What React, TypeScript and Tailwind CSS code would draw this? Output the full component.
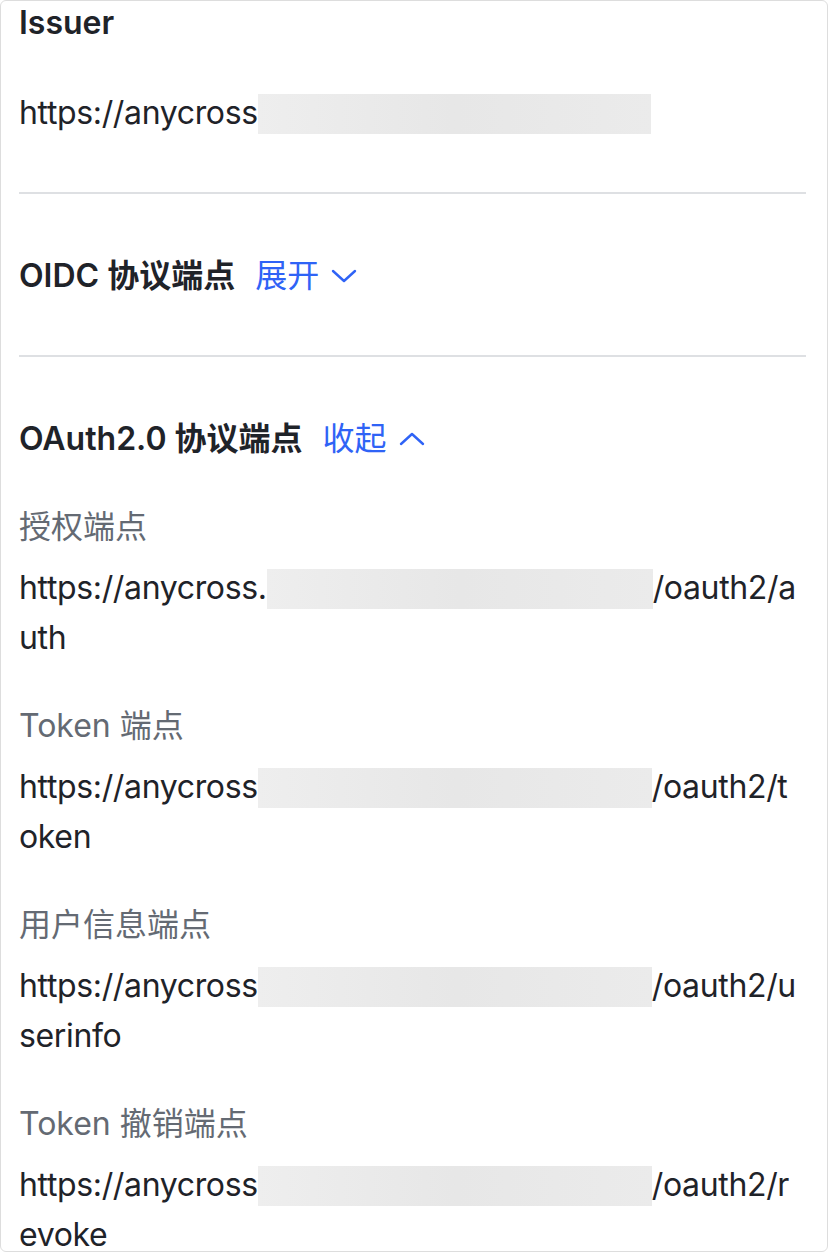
import React from "react";

const FONT = "font-['Inter','Noto_Sans_CJK_SC',sans-serif]";

function Masked({ width }: { width: number }) {
  return (
    <span
      className="inline-block h-[40px] align-[-10px] bg-gradient-to-r from-[#eeeeee] via-[#e7e7e7] to-[#ebebeb]"
      style={{ width }}
    />
  );
}

function Chevron({ up }: { up?: boolean }) {
  return (
    <svg width="26" height="16" viewBox="0 0 26 16" fill="none" className="ml-[12px]">
      <polyline
        points={up ? "2,13 13,3 24,13" : "2,3 13,13 24,3"}
        stroke="#2f63f6"
        strokeWidth="2.4"
        strokeLinecap="round"
        strokeLinejoin="round"
      />
    </svg>
  );
}

type Endpoint = {
  label: string;
  prefix: string;
  mask: number;
  tail: string;
  rest: string;
};

const endpoints: Endpoint[] = [
  { label: "授权端点", prefix: "https://anycross.", mask: 386, tail: "/oauth2/a", rest: "uth" },
  { label: "Token 端点", prefix: "https://anycross", mask: 394, tail: "/oauth2/t", rest: "oken" },
  { label: "用户信息端点", prefix: "https://anycross", mask: 394, tail: "/oauth2/u", rest: "serinfo" },
  { label: "Token 撤销端点", prefix: "https://anycross", mask: 394, tail: "/oauth2/r", rest: "evoke" },
];

function SectionTitle({ title, action, up }: { title: string; action: string; up?: boolean }) {
  return (
    <div className="flex items-center leading-[44px] h-[44px]">
      <span className="text-[32px] font-semibold text-[#1f2329]">{title}</span>
      <span className="ml-[20px] text-[32px] text-[#2f63f6]">{action}</span>
      <Chevron up={up} />
    </div>
  );
}

export default function App() {
  return (
    <div className={`${FONT} w-[828px] h-[1252px] bg-white overflow-hidden`}>
      <div className="h-full border border-[#dddddd] rounded-[6px] overflow-hidden pl-[18px] pr-[20px] antialiased">
        {/* Issuer */}
        <div className="text-[32px] font-semibold leading-[44px] text-[#1f2329]">Issuer</div>
        <div className="mt-[43px] text-[32px] leading-[50px] text-[#1f2329] tracking-[-0.35px]">
          https://anycross
          <Masked width={393} />
        </div>
        <div className="mt-[54px] h-[2px] bg-[#dee0e3] mr-[1px]" />

        {/* OIDC */}
        <div className="pt-[60px] pb-[57px]">
          <SectionTitle title="OIDC 协议端点" action="展开" />
        </div>
        <div className="h-[2px] bg-[#dee0e3] mr-[1px]" />

        {/* OAuth2.0 */}
        <div className="pt-[60px]">
          <SectionTitle title="OAuth2.0 协议端点" action="收起" up />
          <div className="mt-[44px] flex flex-col gap-[41px]">
            {endpoints.map((e) => (
              <div key={e.label}>
                <div className="text-[32px] leading-[44px] text-[#646a73]">{e.label}</div>
                <div className="mt-[14px] text-[32px] leading-[50px] text-[#1f2329] tracking-[-0.35px]">
                  {e.prefix}
                  <Masked width={e.mask} />
                  {e.tail}
                  <br />
                  {e.rest}
                </div>
              </div>
            ))}
          </div>
        </div>
      </div>
    </div>
  );
}
